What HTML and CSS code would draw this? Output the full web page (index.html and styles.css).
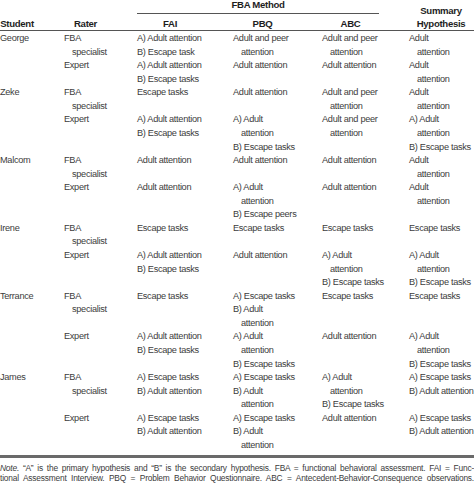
FILE: index.html
```html
<!DOCTYPE html>
<html>
<head>
<meta charset="utf-8">
<link rel="stylesheet" href="styles.css">
</head>
<body>
<div class="page">
<table class="fba">
<colgroup>
<col class="c-student"><col class="c-rater"><col class="c-fai"><col class="c-pbq"><col class="c-abc"><col class="c-sum">
</colgroup>
<thead>
<tr class="h1">
<th rowspan="2" class="hb">Student</th>
<th rowspan="2" class="hb">Rater</th>
<th colspan="3" class="method"><div class="method-label">FBA Method</div></th>
<th rowspan="2" class="hb">Summary<br>Hypothesis</th>
</tr>
<tr class="h2">
<th>FAI</th><th>PBQ</th><th>ABC</th>
</tr>
</thead>
<tbody>
<tr class="first">
<td>George</td>
<td><div class="it">FBA<br>specialist</div></td>
<td><div class="it">A) Adult attention</div><div class="it">B) Escape task</div></td>
<td><div class="it">Adult and peer<br>attention</div></td>
<td><div class="it">Adult and peer<br>attention</div></td>
<td><div class="it">Adult<br>attention</div></td>
</tr>
<tr>
<td></td>
<td><div class="it">Expert</div></td>
<td><div class="it">A) Adult attention</div><div class="it">B) Escape tasks</div></td>
<td><div class="it">Adult attention</div></td>
<td><div class="it">Adult attention</div></td>
<td><div class="it">Adult<br>attention</div></td>
</tr>
<tr>
<td>Zeke</td>
<td><div class="it">FBA<br>specialist</div></td>
<td><div class="it">Escape tasks</div></td>
<td><div class="it">Adult attention</div></td>
<td><div class="it">Adult and peer<br>attention</div></td>
<td><div class="it">Adult<br>attention</div></td>
</tr>
<tr>
<td></td>
<td><div class="it">Expert</div></td>
<td><div class="it">A) Adult attention</div><div class="it">B) Escape tasks</div></td>
<td><div class="it">A) Adult<br>attention</div><div class="it">B) Escape tasks</div></td>
<td><div class="it">Adult and peer<br>attention</div></td>
<td><div class="it">A) Adult<br>attention</div><div class="it">B) Escape tasks</div></td>
</tr>
<tr>
<td>Malcom</td>
<td><div class="it">FBA<br>specialist</div></td>
<td><div class="it">Adult attention</div></td>
<td><div class="it">Adult attention</div></td>
<td><div class="it">Adult attention</div></td>
<td><div class="it">Adult<br>attention</div></td>
</tr>
<tr>
<td></td>
<td><div class="it">Expert</div></td>
<td><div class="it">Adult attention</div></td>
<td><div class="it">A) Adult<br>attention</div><div class="it">B) Escape peers</div></td>
<td><div class="it">Adult attention</div></td>
<td><div class="it">Adult<br>attention</div></td>
</tr>
<tr>
<td>Irene</td>
<td><div class="it">FBA<br>specialist</div></td>
<td><div class="it">Escape tasks</div></td>
<td><div class="it">Escape tasks</div></td>
<td><div class="it">Escape tasks</div></td>
<td><div class="it">Escape tasks</div></td>
</tr>
<tr>
<td></td>
<td><div class="it">Expert</div></td>
<td><div class="it">A) Adult attention</div><div class="it">B) Escape tasks</div></td>
<td><div class="it">Adult attention</div></td>
<td><div class="it">A) Adult<br>attention</div><div class="it">B) Escape tasks</div></td>
<td><div class="it">A) Adult<br>attention</div><div class="it">B) Escape tasks</div></td>
</tr>
<tr>
<td>Terrance</td>
<td><div class="it">FBA<br>specialist</div></td>
<td><div class="it">Escape tasks</div></td>
<td><div class="it">A) Escape tasks</div><div class="it">B) Adult<br>attention</div></td>
<td><div class="it">Escape tasks</div></td>
<td><div class="it">Escape tasks</div></td>
</tr>
<tr>
<td></td>
<td><div class="it">Expert</div></td>
<td><div class="it">A) Adult attention</div><div class="it">B) Escape tasks</div></td>
<td><div class="it">A) Adult<br>attention</div><div class="it">B) Escape tasks</div></td>
<td><div class="it">Adult attention</div></td>
<td><div class="it">A) Adult<br>attention</div><div class="it">B) Escape tasks</div></td>
</tr>
<tr>
<td>James</td>
<td><div class="it">FBA<br>specialist</div></td>
<td><div class="it">A) Escape tasks</div><div class="it">B) Adult attention</div></td>
<td><div class="it">A) Escape tasks</div><div class="it">B) Adult<br>attention</div></td>
<td><div class="it">A) Adult<br>attention</div><div class="it">B) Escape tasks</div></td>
<td><div class="it">A) Escape tasks</div><div class="it">B) Adult attention</div></td>
</tr>
<tr class="last">
<td></td>
<td><div class="it">Expert</div></td>
<td><div class="it">A) Escape tasks</div><div class="it">B) Adult attention</div></td>
<td><div class="it">A) Escape tasks</div><div class="it">B) Adult<br>attention</div></td>
<td><div class="it">Adult attention</div></td>
<td><div class="it">A) Escape tasks</div><div class="it">B) Adult attention</div></td>
</tr>
</tbody>
</table>
<div class="note">
<div class="nl"><i>Note.</i> “A” is the primary hypothesis and “B” is the secondary hypothesis. FBA = functional behavioral assessment. FAI = Func-</div>
<div class="nl">tional Assessment Interview. PBQ = Problem Behavior Questionnaire. ABC = Antecedent-Behavior-Consequence observations.</div>
</div>
</div>
</body>
</html>
```
FILE: styles.css
```css
html, body {
  margin: 0;
  padding: 0;
  background: #ffffff;
}
body {
  width: 474px;
  height: 485px;
  overflow: hidden;
  font-family: "Liberation Sans", Arial, sans-serif;
  color: #3c3c3c;
}
.page {
  width: 474px;
  overflow: hidden;
}
.fba {
  border-collapse: collapse;
  table-layout: fixed;
  width: 503px;
  font-size: 9.2px;
  letter-spacing: -0.3px;
}
.c-student { width: 64px; }
.c-rater { width: 73px; }
.c-fai { width: 96px; }
.c-pbq { width: 89px; }
.c-abc { width: 87px; }
.c-sum { width: 94px; }

th {
  font-weight: bold;
  color: #1e1e1e;
  font-size: 9.6px;
  letter-spacing: -0.3px;
  text-align: center;
  padding: 0 30px 0 0;
  line-height: 13px;
}
th.hb {
  vertical-align: bottom;
  text-align: center;
}
.h1 .method {
  padding-bottom: 2px;
  line-height: 10px;
  vertical-align: top;
}
.method-label {
  border-bottom: 1px solid #555;
  padding-bottom: 3px;
}
.h2 th {
  padding-top: 1px;
}
thead {
  border-bottom: 1px solid #555;
}
td {
  vertical-align: top;
  padding: 0 4px 0 0;
  line-height: 13.56px;
  white-space: nowrap;
}
tr.first td {
  padding-top: 1px;
}
.it {
  padding-left: 8px;
  text-indent: -8px;
}
tr.last td {
  padding-bottom: 2.5px;
}
tbody {
  border-bottom: 3px solid #6a6a6a;
}
.note {
  padding-top: 5px;
  font-size: 8.4px;
  letter-spacing: -0.2px;
  line-height: 10px;
  color: #3c3c3c;
}
.nl {
  white-space: nowrap;
  text-align: justify;
  text-align-last: justify;
}
```
